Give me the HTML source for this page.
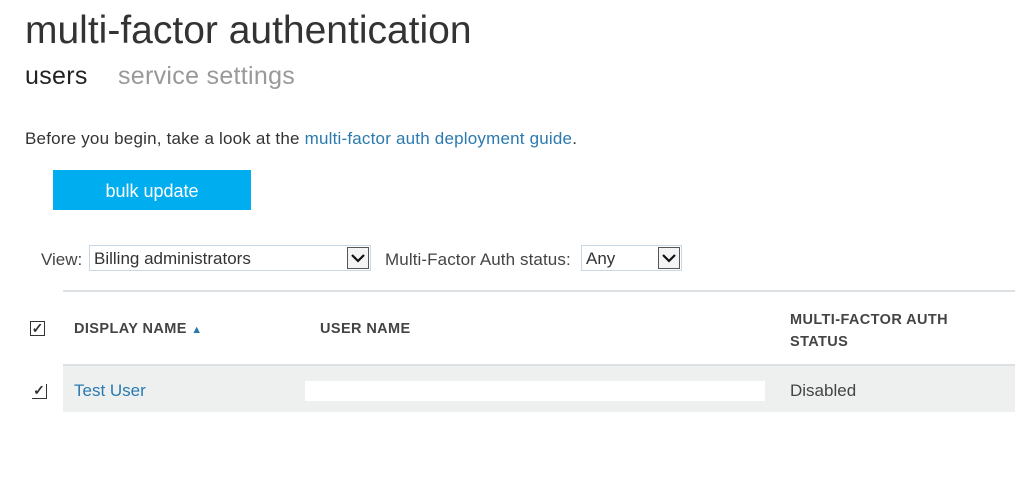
<!DOCTYPE html>
<html><head><style>
body{margin:0;width:1015px;height:487px;background:#fff;font-family:"Liberation Sans",sans-serif;position:relative;overflow:hidden;color:#333}
.a{position:absolute;white-space:nowrap}
.sel{position:absolute;border:1px solid #c9d6e3;background:#fff;height:26px;box-sizing:border-box;font-size:17px;color:#333;line-height:26px;padding-left:4px}
.arr{position:absolute;top:1px;width:22px;height:22px;border:1px solid #555;box-sizing:border-box;background:#f4f4f4}
.h{font-weight:bold;font-size:14.5px;color:#444;letter-spacing:.4px}
.cb{position:absolute;width:15px;height:15px;border:1px solid #333;box-sizing:border-box;font-size:14px;line-height:13px;text-align:center;font-weight:bold}
</style></head><body>
<div class="a" style="left:25px;top:9px;font-size:39px;color:#333;letter-spacing:0">multi-factor authentication</div>
<div class="a" style="left:25px;top:62px;font-size:25px;color:#222;letter-spacing:.3px">users</div>
<div class="a" style="left:118px;top:62px;font-size:25px;color:#999;letter-spacing:.3px">service settings</div>
<div class="a" style="left:25px;top:129px;font-size:17px;color:#333;letter-spacing:.2px">Before you begin, take a look at the <span style="color:#2a7ab0">multi-factor auth deployment guide</span>.</div>
<div class="a" style="left:53px;top:170px;width:198px;height:40px;background:#00aeef;color:#fff;font-size:18px;text-align:center;line-height:42px">bulk update</div>
<div class="a" style="left:41px;top:250px;font-size:17px;color:#444">View:</div>
<div class="sel" style="left:89px;top:245px;width:282px">Billing administrators<div class="arr" style="right:1px"><svg width="20" height="20" viewBox="0 0 20 20"><path d="M4 7l6 6 6-6" stroke="#111" stroke-width="2.2" fill="none"/></svg></div></div>
<div class="a" style="left:385px;top:250px;font-size:17px;color:#444;letter-spacing:.1px">Multi-Factor Auth status:</div>
<div class="sel" style="left:581px;top:245px;width:101px">Any<div class="arr" style="right:1px"><svg width="20" height="20" viewBox="0 0 20 20"><path d="M4 7l6 6 6-6" stroke="#111" stroke-width="2.2" fill="none"/></svg></div></div>
<div class="a" style="left:63px;top:290px;width:952px;height:2px;background:#dde1e3"></div>
<div class="cb" style="left:30px;top:321px">✓</div>
<div class="a h" style="left:74px;top:321px">DISPLAY NAME <span style="font-size:11px;color:#2a7ab0">▲</span></div>
<div class="a h" style="left:320px;top:321px">USER NAME</div>
<div class="a h" style="left:790px;top:309px;line-height:22px">MULTI-FACTOR AUTH<br>STATUS</div>
<div class="a" style="left:63px;top:364px;width:952px;height:48px;background:#eef0f0;border-top:2px solid #dde1e3;box-sizing:border-box"></div>
<div class="a" style="left:305px;top:381px;width:460px;height:20px;background:#fff"></div>
<div class="cb" style="left:32px;top:384px;border:none;border-bottom:1px solid #333;border-right:1px solid #333">✓</div>
<div class="a" style="left:74px;top:381px;font-size:17px;color:#2a7ab0">Test User</div>
<div class="a" style="left:790px;top:381px;font-size:17px;color:#444">Disabled</div>
</body></html>
